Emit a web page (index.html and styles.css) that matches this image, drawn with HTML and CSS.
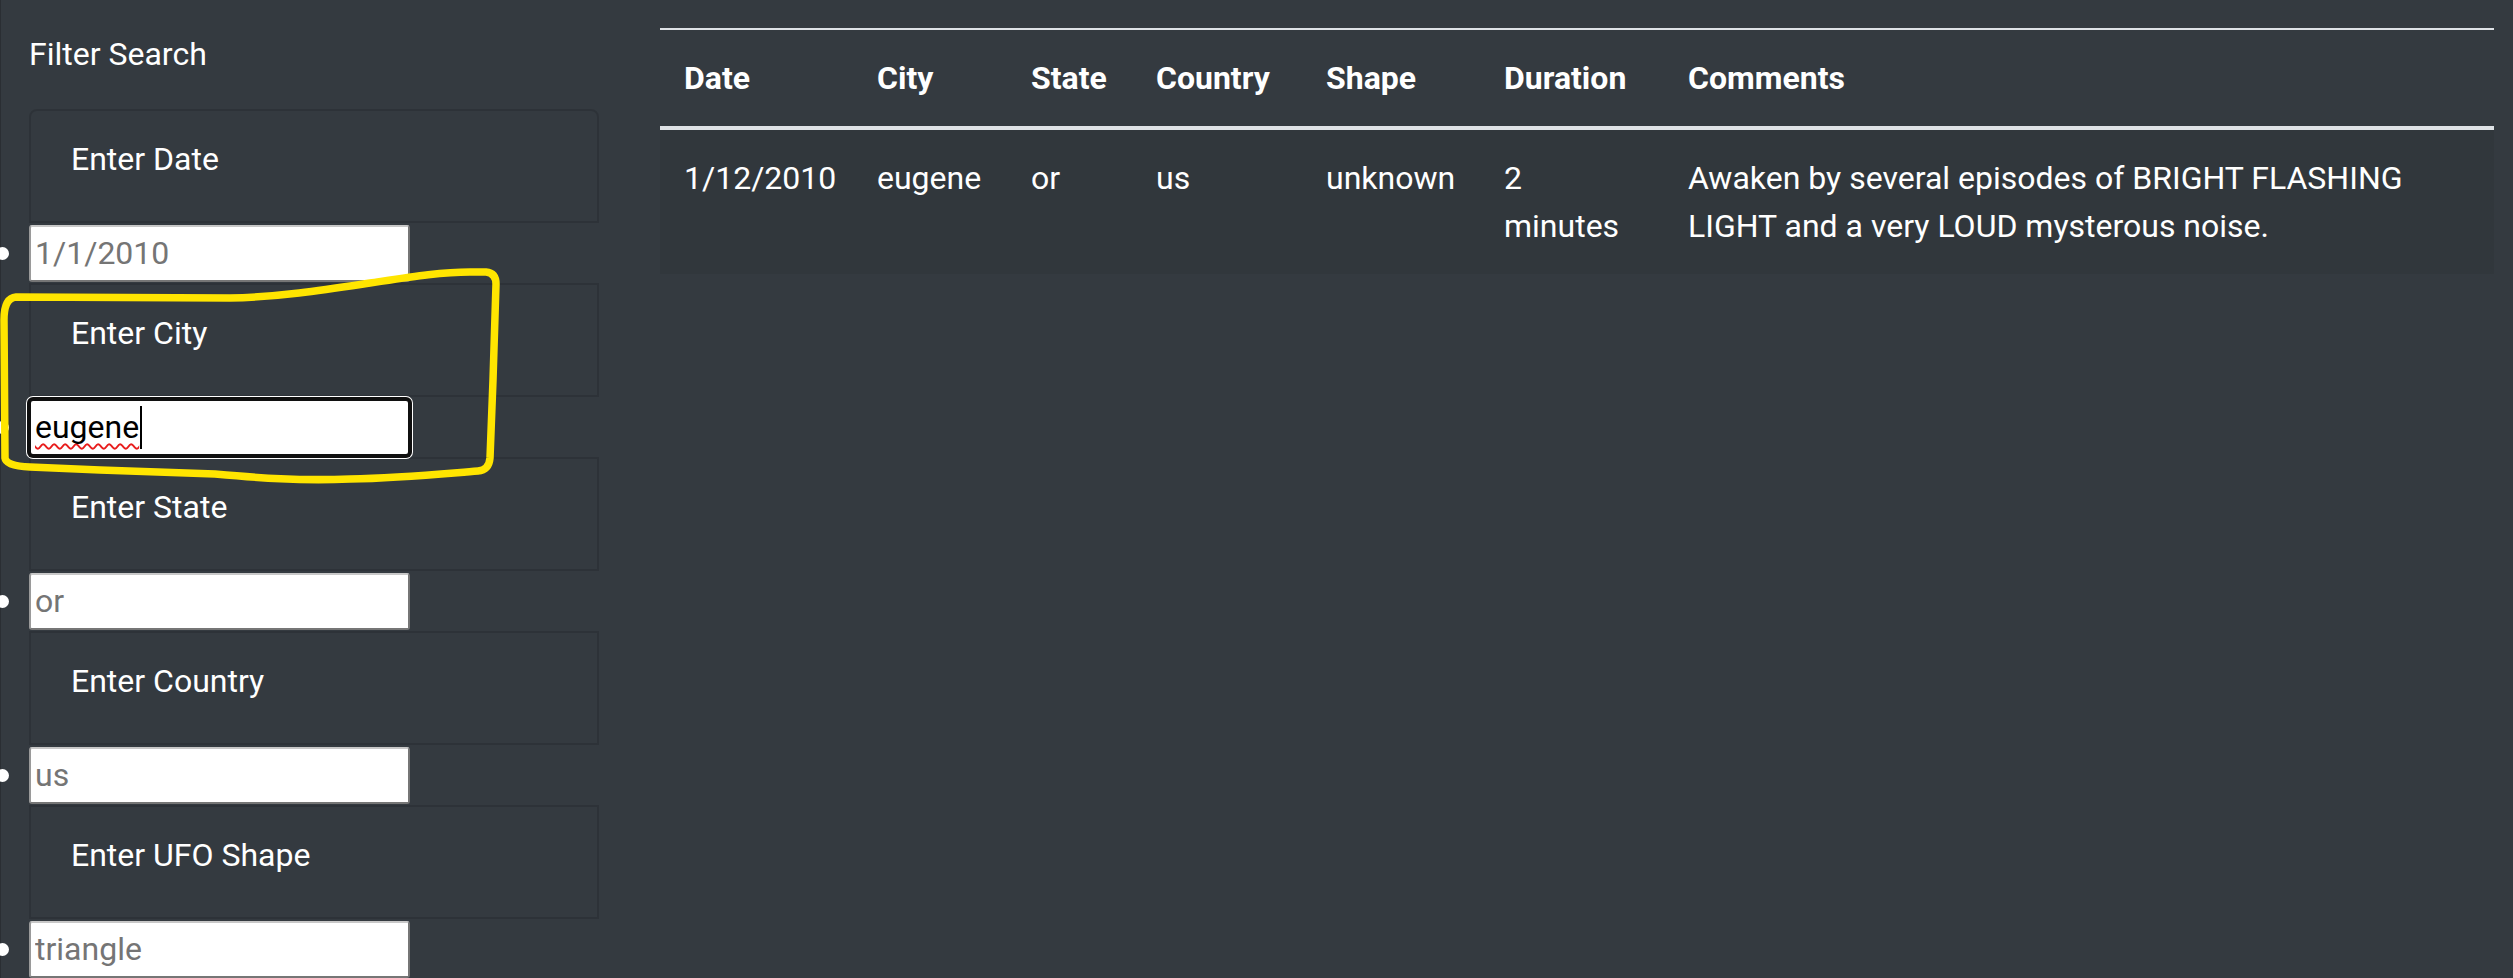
FILE: index.html
```html
<!DOCTYPE html>
<html lang="en">
<head>
<meta charset="utf-8">
<title>UFO Sightings</title>
<link rel="stylesheet" href="styles.css">
</head>
<body>
<div class="page">
  <aside class="sidebar">
    <div class="sidebar-title">Filter Search</div>
    <ul class="filters">
      <li class="filter-card first"><label for="datetime">Enter Date</label></li>
      <li class="filter-input"><input id="datetime" class="field" type="text" placeholder="1/1/2010"></li>
      <li class="filter-card"><label for="city">Enter City</label></li>
      <li class="filter-input"><div id="city" class="field focused" role="textbox"><span class="typed">eugene</span><span class="caret"></span></div></li>
      <li class="filter-card"><label for="state">Enter State</label></li>
      <li class="filter-input"><input id="state" class="field" type="text" placeholder="or"></li>
      <li class="filter-card"><label for="country">Enter Country</label></li>
      <li class="filter-input"><input id="country" class="field" type="text" placeholder="us"></li>
      <li class="filter-card"><label for="shape">Enter UFO Shape</label></li>
      <li class="filter-input"><input id="shape" class="field" type="text" placeholder="triangle"></li>
    </ul>
  </aside>
  <main class="results">
    <table class="ufo-table">
      <colgroup>
        <col class="c-date">
        <col class="c-city">
        <col class="c-state">
        <col class="c-country">
        <col class="c-shape">
        <col class="c-duration">
        <col class="c-comments">
      </colgroup>
      <thead>
        <tr>
          <th>Date</th>
          <th>City</th>
          <th>State</th>
          <th>Country</th>
          <th>Shape</th>
          <th>Duration</th>
          <th>Comments</th>
        </tr>
      </thead>
      <tbody>
        <tr>
          <td>1/12/2010</td>
          <td>eugene</td>
          <td>or</td>
          <td>us</td>
          <td>unknown</td>
          <td class="duration">2 minutes</td>
          <td><span class="comment-text">Awaken by several episodes of BRIGHT FLASHING LIGHT and a very LOUD mysterous noise.</span></td>
        </tr>
      </tbody>
    </table>
  </main>
  <svg class="annotation" width="520" height="500" viewBox="0 0 520 500" aria-hidden="true">
    <path d="M 5 458 L 4 320 Q 4 298 16 297 L 230 298 C 280 297 330 289 370 283 C 410 277 440 272 470 272 L 486 272 Q 496 273 496 284 L 493 380 L 490 458 Q 489 470 478 471 C 440 474 400 478 350 479 C 300 481 260 478 215 474 L 100 470 L 30 467 Q 6 466 5 458 Z" fill="none" stroke="#ffe500" stroke-width="7.5" stroke-linejoin="round" stroke-linecap="round"/>
  </svg>
</div>
</body>
</html>
```

FILE: styles.css
```css
html, body {
  margin: 0;
  padding: 0;
  background: #343a40;
}

body {
  font-family: Roboto, "Open Sans", "Liberation Sans", sans-serif;
  font-size: 32px;
  line-height: 48px;
  color: #fff;
}

.page {
  position: relative;
  display: flex;
  align-items: flex-start;
  min-height: 978px;
  box-sizing: border-box;
  padding-top: 28px;
  overflow: hidden;
  box-shadow: inset 1px 0 0 #2a2e33;
}

/* ---------- sidebar ---------- */
.sidebar {
  flex: none;
  width: 570px;
  margin-left: 29px;
}

.sidebar-title {
  margin-top: 2px;
  margin-bottom: 31px;
  height: 48px;
}

.filters {
  list-style: none;
  margin: 0;
  padding: 0;
}

.filter-card {
  box-sizing: border-box;
  height: 114px;
  padding: 24px 40px;
  border: 2px solid rgba(0, 0, 0, 0.125);
}

.filter-card.first {
  border-radius: 8px 8px 0 0;
}

.filter-card label {
  display: block;
  line-height: 48px;
}

.filter-input {
  display: flex;
  align-items: center;
  height: 60px;
  margin-left: -29px;
}

.filter-input::before {
  content: "";
  flex: none;
  width: 13px;
  height: 13px;
  margin: 0 20px 0 -4px;
  border-radius: 50%;
  background: #fff;
}

.field {
  box-sizing: border-box;
  width: 381px;
  height: 57px;
  margin: 0;
  padding: 2px 4px;
  border: 2px solid #767676;
  border-top-color: #c8c8c8;
  border-left-color: #9a9a9a;
  border-radius: 3px;
  background: #fff;
  color: #000;
  font: inherit;
  line-height: 48px;
}

.field::placeholder {
  color: #757575;
  opacity: 1;
}

.field.focused {
  display: flex;
  align-items: center;
  border-color: #101010;
  border-radius: 4px;
  box-shadow: 0 0 0 2px #101010, 0 0 0 3px #fff;
}

.typed {
  text-decoration: underline wavy #e81c1c;
  text-decoration-thickness: 2px;
  text-underline-offset: 5px;
  text-decoration-skip-ink: none;
}

.caret {
  width: 2px;
  height: 43px;
  margin-left: 1px;
  background: #000;
}

/* ---------- table ---------- */
.results {
  flex: none;
  margin-left: 61px;
  width: 1834px;
}

.ufo-table {
  width: 1834px;
  table-layout: fixed;
  border-collapse: separate;
  border-spacing: 0;
  color: #fff;
}

.c-date { width: 193px; }
.c-city { width: 154px; }
.c-state { width: 125px; }
.c-country { width: 170px; }
.c-shape { width: 178px; }
.c-duration { width: 184px; }
.c-comments { width: 830px; }

.ufo-table th,
.ufo-table td {
  padding: 24px;
  text-align: left;
  vertical-align: top;
  line-height: 48px;
}

.ufo-table th {
  font-weight: 700;
  border-top: 2px solid #dee2e6;
  border-bottom: 4px solid #dee2e6;
}

.ufo-table tbody tr {
  background: rgba(0, 0, 0, 0.05);
}

.ufo-table td.duration {
  padding-right: 40px;
}

.comment-text {
  display: block;
  max-width: 760px;
}

/* ---------- annotation ---------- */
.annotation {
  position: absolute;
  left: 0;
  top: 0;
  pointer-events: none;
}
```
